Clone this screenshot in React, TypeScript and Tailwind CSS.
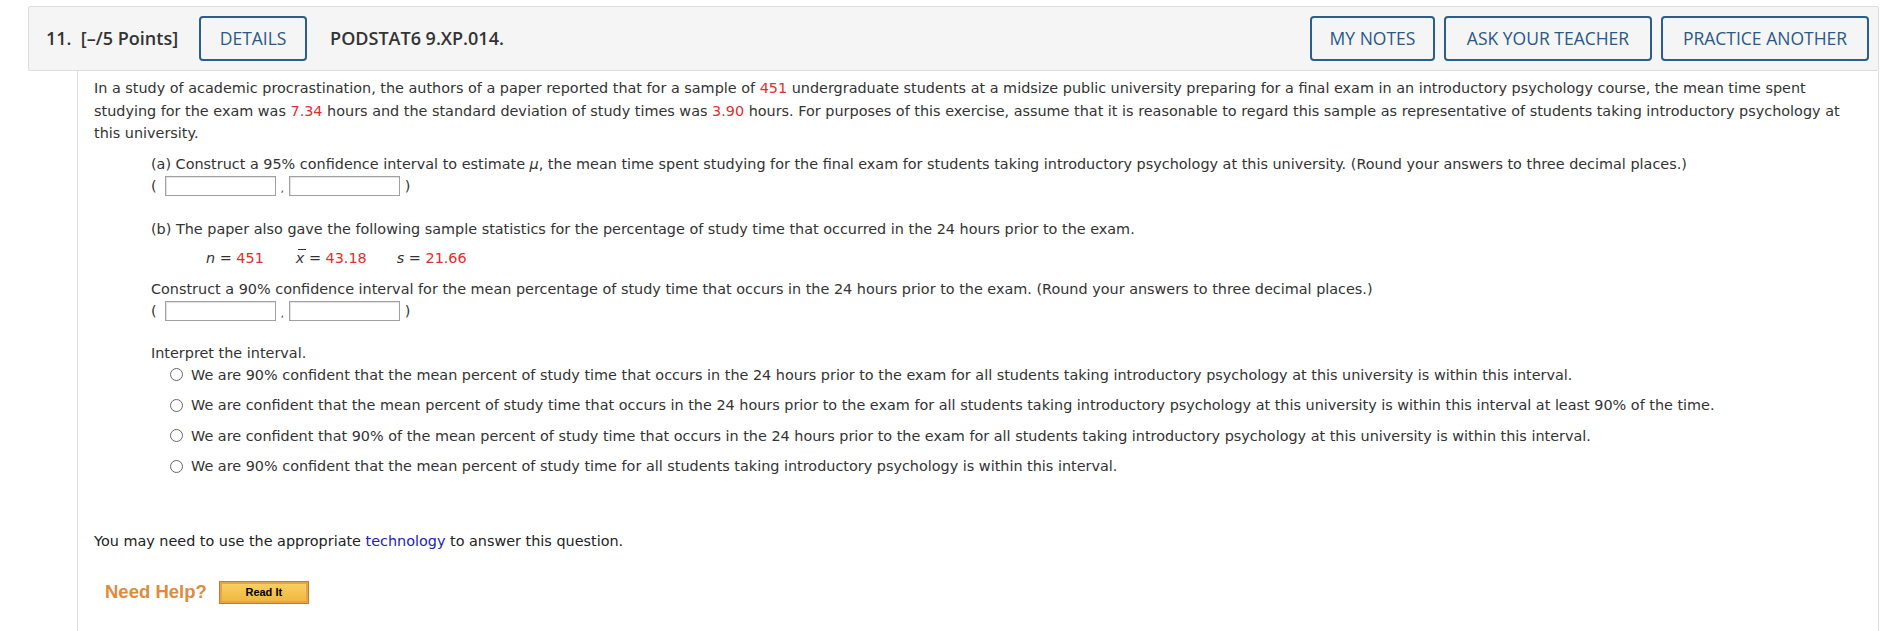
import React from 'react'

const red = 'text-[#e12d2d]'

function AnswerBox() {
  return (
    <span className="inline-block w-[111px] h-[20px] border border-[#a0a0a0] bg-white shadow-[inset_1px_1px_1px_rgba(0,0,0,0.12)] align-middle" />
  )
}

function IntervalRow() {
  return (
    <div className="flex items-center h-[22px] text-[#333]">
      <span className="mr-[8px]">(</span>
      <AnswerBox />
      <span className="mx-[5px] text-[10px] mt-[6px]">,</span>
      <AnswerBox />
      <span className="ml-[5px]">)</span>
    </div>
  )
}

function HeaderButton({ label, width }: { label: string; width: string }) {
  return (
    <button
      className={`h-[45px] ${width} rounded-[4px] border-2 border-[#2c5d8f] text-[#2a5888] text-[17.5px] font-medium bg-transparent flex items-center justify-center`}
    >
      {label}
    </button>
  )
}

const choices = [
  'We are 90% confident that the mean percent of study time that occurs in the 24 hours prior to the exam for all students taking introductory psychology at this university is within this interval.',
  'We are confident that the mean percent of study time that occurs in the 24 hours prior to the exam for all students taking introductory psychology at this university is within this interval at least 90% of the time.',
  'We are confident that 90% of the mean percent of study time that occurs in the 24 hours prior to the exam for all students taking introductory psychology at this university is within this interval.',
  'We are 90% confident that the mean percent of study time for all students taking introductory psychology is within this interval.',
]

export default function App() {
  return (
    <div className="w-[1893px] h-[631px] bg-white overflow-hidden pt-[6px]">
      {/* Question header */}
      <div
        className="ml-[28px] w-[1851px] h-[65px] bg-[#f5f5f5] border border-[#dddddd] rounded-[2px] flex items-center pl-[17px] pr-[9px]"
        style={{ fontFamily: '"Open Sans", sans-serif' }}
      >
        <span className="text-[18px] font-semibold text-[#333]">11.&nbsp; [–/5 Points]</span>
        <div className="ml-[21px]">
          <HeaderButton label="DETAILS" width="w-[108px]" />
        </div>
        <span className="ml-[23px] text-[18px] font-semibold text-[#333]">PODSTAT6 9.XP.014.</span>
        <div className="ml-auto flex gap-[9px]">
          <HeaderButton label="MY NOTES" width="w-[125px]" />
          <HeaderButton label="ASK YOUR TEACHER" width="w-[208px]" />
          <HeaderButton label="PRACTICE ANOTHER" width="w-[208px]" />
        </div>
      </div>

      {/* Question body */}
      <div
        className="ml-[77px] w-[1802px] h-[600px] border-l border-r border-[#dddddd] pl-[16px] pr-[20px] pt-[6px] text-[14.4px] leading-[22.5px] text-[#333]"
        style={{ fontFamily: '"DejaVu Sans", Verdana, sans-serif' }}
      >
        <p>
          In a study of academic procrastination, the authors of a paper reported that for a sample of{' '}
          <span className={red}>451</span> undergraduate students at a midsize public university preparing for a final exam in an
          introductory psychology course, the mean time spent
          <br />
          studying for the exam was <span className={red}>7.34</span> hours and the standard deviation of study times was{' '}
          <span className={red}>3.90</span> hours. For purposes of this exercise, assume that it is reasonable to regard this sample
          as representative of students taking introductory psychology at
          <br />
          this university.
        </p>

        <div className="ml-[57px] mt-[8px] leading-[22px]">
          <p>
            (a) Construct a 95% confidence interval to estimate <i>μ</i>, the mean time spent studying for the final exam for
            students taking introductory psychology at this university. (Round your answers to three decimal places.)
          </p>
          <IntervalRow />

          <p className="mt-[21px]">
            (b) The paper also gave the following sample statistics for the percentage of study time that occurred in the 24 hours
            prior to the exam.
          </p>
          <div className="mt-[7px] ml-[55px] flex items-center h-[22px]">
            <span>
              <i>n</i> = <span className={red}>451</span>
            </span>
            <span className="ml-[32px]">
              <span className="relative inline-block">
                <i>x</i>
                <span className="absolute left-[2px] top-[2px] w-[8px] h-px bg-[#333]" />
              </span>{' '}
              = <span className={red}>43.18</span>
            </span>
            <span className="ml-[30px]">
              <i>s</i> = <span className={red}>21.66</span>
            </span>
          </div>

          <p className="mt-[9px]">
            Construct a 90% confidence interval for the mean percentage of study time that occurs in the 24 hours prior to the
            exam. (Round your answers to three decimal places.)
          </p>
          <IntervalRow />

          <p className="mt-[20px]">Interpret the interval.</p>
          <div className="flex flex-col gap-[8.5px]">
            {choices.map((c) => (
              <div key={c} className="flex items-center h-[22px] ml-[19px]">
                <span className="w-[13px] h-[13px] rounded-full border border-[#666] bg-white shrink-0" />
                <span className="ml-[8px]">{c}</span>
              </div>
            ))}
          </div>
        </div>

        <p className="mt-[53px] text-[#222]">
          You may need to use the appropriate <span className="text-[#2020c0]">technology</span> to answer this question.
        </p>

        <div className="mt-[28px] ml-[11px] flex items-center" style={{ fontFamily: '"Liberation Sans", Arial, sans-serif' }}>
          <span className="text-[18.5px] font-bold text-[#e08a3c]">Need Help?</span>
          <button className="ml-[12px] w-[90px] h-[23px] border border-[#c77b2c] bg-[#e8a24a] p-[2px]">
            <span className="flex items-center justify-center w-full h-full bg-gradient-to-b from-[#f7cf63] to-[#f0b83f] text-[11px] font-bold text-black">
              Read It
            </span>
          </button>
        </div>
      </div>
    </div>
  )
}
